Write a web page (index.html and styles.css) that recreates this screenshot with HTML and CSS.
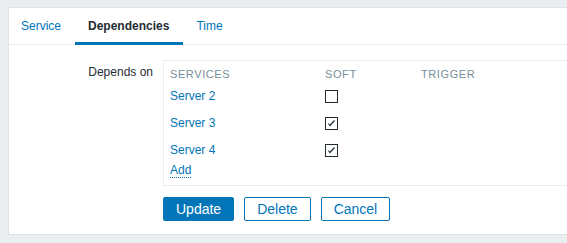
FILE: index.html
```html
<!DOCTYPE html>
<html>
<head>
<meta charset="utf-8">
<link rel="stylesheet" href="styles.css">
</head>
<body>
<div class="panel">
  <ul class="tabs">
    <li class="tab"><a href="#">Service</a></li>
    <li class="tab active"><a href="#">Dependencies</a></li>
    <li class="tab"><a href="#">Time</a></li>
  </ul>
  <div class="form">
    <div class="label">Depends on</div>
    <div class="box">
      <div class="grid head">
        <div>SERVICES</div><div>SOFT</div><div>TRIGGER</div>
      </div>
      <div class="grid row">
        <a class="link" href="#">Server 2</a>
        <span class="cb"><svg width="13" height="13" viewBox="0 0 13 13"><rect x="0.5" y="0.5" width="12" height="12" fill="#fff" stroke="#1f2c33"/></svg></span>
        <span></span>
      </div>
      <div class="grid row">
        <a class="link" href="#">Server 3</a>
        <span class="cb"><svg width="13" height="13" viewBox="0 0 13 13"><rect x="0.5" y="0.5" width="12" height="12" fill="#fff" stroke="#1f2c33"/><path d="M3.5 6.5 L5 8.5 L9.5 3.5" fill="none" stroke="#1f2c33" stroke-width="1.2"/></svg></span>
        <span></span>
      </div>
      <div class="grid row">
        <a class="link" href="#">Server 4</a>
        <span class="cb"><svg width="13" height="13" viewBox="0 0 13 13"><rect x="0.5" y="0.5" width="12" height="12" fill="#fff" stroke="#1f2c33"/><path d="M3.5 6.5 L5 8.5 L9.5 3.5" fill="none" stroke="#1f2c33" stroke-width="1.2"/></svg></span>
        <span></span>
      </div>
      <div class="addrow"><a class="add" href="#">Add</a></div>
    </div>
    <div></div>
    <div class="buttons">
      <button class="btn primary">Update</button>
      <button class="btn">Delete</button>
      <button class="btn">Cancel</button>
    </div>
  </div>
</div>
</body>
</html>
```
FILE: styles.css
```css
html, body {
  margin: 0;
  padding: 0;
  background: #ebeef0;
}
body {
  font-family: "Liberation Sans", Arial, sans-serif;
  font-size: 12px;
  color: #1f2c33;
}
.panel {
  margin: 7px 0 0 8px;
  height: 226px;
  background: #fff;
  border: 1px solid #dfe4e7;
  border-right: none;
}
.tabs {
  list-style: none;
  margin: 0;
  padding: 0;
  display: flex;
  height: 36px;
  border-bottom: 1px solid #ebeef0;
}
.tab {
  padding: 2px 14px 0 13px;
  line-height: 32px;
  border-bottom: 3px solid transparent;
  margin-bottom: -1px;
}
.tab:first-child {
  padding-left: 12px;
}
.tab a {
  color: #0275b8;
  text-decoration: none;
}
.tab.active {
  border-bottom-color: #0275b8;
}
.tab.active a {
  color: #1f2c33;
  font-weight: bold;
}
.form {
  display: grid;
  grid-template-columns: 144px 1fr;
  column-gap: 10px;
  row-gap: 11px;
  padding-top: 15px;
}
.label {
  text-align: right;
  padding-top: 5px;
  line-height: 14px;
}
.box {
  border: 1px solid #ebeef0;
  border-right: none;
  padding: 0 0 7px 6px;
}
.grid {
  display: grid;
  grid-template-columns: 155px 96px 1fr;
  align-items: center;
}
.head {
  padding: 6px 0 1px;
  line-height: 14px;
  font-size: 11px;
  letter-spacing: 0.6px;
  color: #768d99;
}
.row {
  height: 27px;
  line-height: 28px;
}
.link {
  color: #0275b8;
  text-decoration: none;
}
.cb {
  display: flex;
  align-items: center;
  height: 27px;
}
.addrow {
  line-height: 15px;
}
.add {
  color: #0275b8;
  text-decoration: none;
  border-bottom: 1px dotted #0275b8;
}
.buttons {
  display: flex;
  gap: 10px;
}
.btn {
  height: 24px;
  padding: 0 12px;
  border: 1px solid #0275b8;
  border-radius: 2px;
  background: #fff;
  color: #0275b8;
  font-family: "Liberation Sans", Arial, sans-serif;
  font-size: 14px;
  line-height: 22px;
}
.btn.primary {
  background: #0275b8;
  color: #fff;
}
```
